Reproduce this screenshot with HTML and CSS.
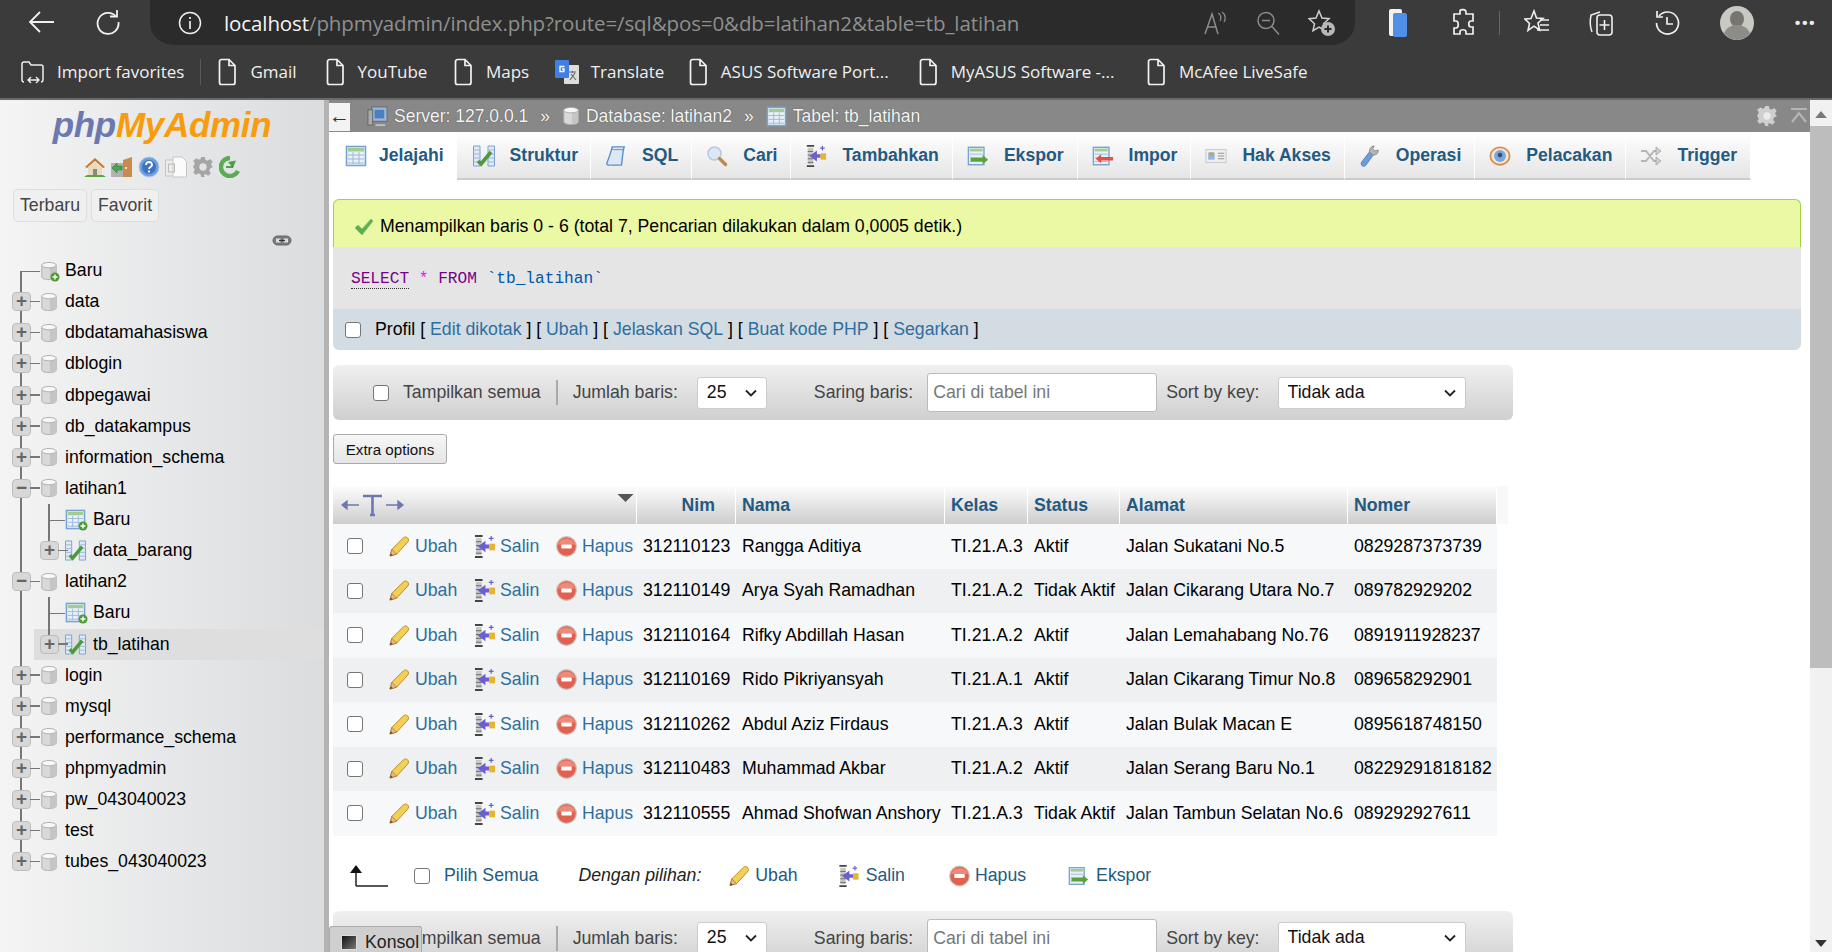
FILE: index.html
```html
<!DOCTYPE html>
<html lang="id">
<head>
<meta charset="utf-8">
<title>phpMyAdmin</title>
<link rel="stylesheet" href="styles.css">
</head>
<body>
<svg class="sprite" aria-hidden="true">
  <symbol id="page" viewBox="0 0 20 28"><path d="M2.500 3.500a2 2 0 0 1 2-2h7.500l6 6v17a2 2 0 0 1-2 2h-11.500a2 2 0 0 1-2-2z M12 1.500v6h6" fill="none" stroke="#f2f2f2" stroke-width="1.700"/></symbol>
  <symbol id="db" viewBox="0 0 20 22"><path d="M2 4.500v13c0 1.800 3.500 3 8 3s8-1.200 8-3v-13z" fill="#d9d9d9" stroke="#aaa"/><path d="M11 7h7v10.500c0 1.500-3 2.600-7 2.900z" fill="#c5c5c5"/><ellipse cx="10" cy="4.500" rx="8" ry="3" fill="#f7f7f7" stroke="#aaa"/></symbol>
  <symbol id="plusbadge" viewBox="0 0 10 10"><circle cx="5" cy="5" r="4.500" fill="#4e9a33"/><path d="M2.500 5h5M5 2.500v5" stroke="#fff" stroke-width="1.400"/></symbol>
  <symbol id="tbl" viewBox="0 0 22 22"><rect x="1.500" y="1.500" width="19" height="19" fill="#e9f0f8" stroke="#7aa3d3" stroke-width="1.600"/><rect x="3" y="3" width="16" height="3.500" fill="#9fcf8f"/><path d="M3 10h16M3 14h16M3 18h16M8 7v12M14 7v12" stroke="#9db9d9"/></symbol>
  <symbol id="struct" viewBox="0 0 22 22"><path d="M.5 1h6.500v20h-6.500zM15 1h6.500v20h-6.500z" fill="#dfe9f5" stroke="#7aa3d3"/><path d="M1 5h6M1 9h6M1 13h6M1 17h6M15 5h6M15 9h6M15 13h6M15 17h6" stroke="#9db9d9"/><path d="M5 16l3 3 10-12" fill="none" stroke="#4c9a3a" stroke-width="3.600"/></symbol>
  <symbol id="scroll" viewBox="0 0 22 24"><path d="M7 2h13c-2 6-2 14-3 20h-14c-1 0-2-1-2-2 2-5 4-11 6-18z" fill="#dce8f6" stroke="#5d8fc7" stroke-width="1.500"/><path d="M7 2c-1 0-1 3 1 3h11" fill="none" stroke="#5d8fc7"/></symbol>
  <symbol id="search" viewBox="0 0 22 22"><circle cx="8.500" cy="8.500" r="6.500" fill="#dbe7f6" stroke="#b8cade" stroke-width="1.600"/><path d="M13.500 13.500l6 6" stroke="#c08a4a" stroke-width="3.400" stroke-linecap="round"/></symbol>
  <symbol id="insrow" viewBox="0 0 22 24"><path d="M1 1h8M1 23h8" stroke="#444" stroke-width="2"/><path d="M2 3h6v18h-6z" fill="#c8c8c8"/><path d="M2 7h6M2 11h6M2 15h6M2 19h6" stroke="#666"/><path d="M4 12l8-6v4h4v4h-4v4z" fill="#6a5fd0"/><rect x="16" y="9" width="6" height="7" fill="#e7b42c"/><path d="M18 1v5M15.500 3.500h5" stroke="#6a5fd0" stroke-width="1.300"/></symbol>
  <symbol id="export" viewBox="0 0 24 22"><rect x="1.500" y="1.500" width="17" height="19" fill="#e9f0f8" stroke="#7aa3d3" stroke-width="1.500"/><rect x="3" y="3" width="14" height="3" fill="#9fcf8f"/><path d="M3 9h14M3 13h14M3 17h14" stroke="#9db9d9"/><path d="M4 13h13v-3l6 5-6 5v-3h-13z" fill="#5aa23a"/></symbol>
  <symbol id="import" viewBox="0 0 24 22"><rect x="1.500" y="1.500" width="17" height="19" fill="#e9f0f8" stroke="#7aa3d3" stroke-width="1.500"/><rect x="3" y="3" width="14" height="3" fill="#9fcf8f"/><path d="M3 9h14M3 13h14M3 17h14" stroke="#9db9d9"/><path d="M23 12h-13v-3l-6 5 6 5v-3h13z" fill="#e2504a"/></symbol>
  <symbol id="card" viewBox="0 0 24 20"><rect x="1" y="3" width="22" height="14" fill="#eef0f2" stroke="#c5c5c5"/><rect x="3.500" y="6" width="7" height="8" fill="#8fb7e3"/><circle cx="7" cy="8" r="2" fill="#d89a5c"/><path d="M14 7h7M14 10h7M14 13h7" stroke="#8a8a8a"/></symbol>
  <symbol id="wrench" viewBox="0 0 22 24"><path d="M3 23c-2-1-2-3-1-4.500l8.500-11 4 3.500-8 11c-.8 1-2 1.500-3.500 1z" fill="#6d9bd6" stroke="#4f7fbb"/><path d="M10.500 7.500c-.5-3 1.500-6 5-6.500l-1.500 3 2 2.500 4-1c.5 3-2.500 6.500-6.500 5z" fill="#b5b5b5" stroke="#888"/></symbol>
  <symbol id="eye" viewBox="0 0 24 22"><ellipse cx="12" cy="11" rx="10.500" ry="9.500" fill="#f7e6d6" stroke="#d98d4e" stroke-width="2"/><circle cx="12" cy="11" r="6.500" fill="#7da6dc"/><circle cx="12" cy="10" r="2.500" fill="#2e4e80"/></symbol>
  <symbol id="shuffle" viewBox="0 0 22 20"><path d="M1 5h5l8 10h3M1 15h5l8-10h3" fill="none" stroke="#b5b5b5" stroke-width="2"/><path d="M16 1l5 4-5 4zM16 11l5 4-5 4z" fill="#d0d0d0" stroke="#999" stroke-width=".7"/></symbol>
  <symbol id="pencil" viewBox="0 0 22 22"><path d="M1 21l2-7L15 2c1.500-1.500 3.500-1 4.500 0s1.500 3 0 4.500L8 19z" fill="#f3cf56" stroke="#b78a2a"/><path d="M1 21l2-7 5 5z" fill="#e7b98a" stroke="#a8733a" stroke-width=".8"/><path d="M1 21l.9-3 2.100 2.100z" fill="#6b4a2a"/></symbol>
  <symbol id="minus" viewBox="0 0 22 22"><circle cx="11" cy="11" r="10.300" fill="#e2604f" stroke="#c9c0b5" stroke-width="1.200"/><path d="M2 9a9.500 9.500 0 0 1 18 0z" fill="#ee8a7a"/><rect x="5.500" y="9" width="11" height="4" rx="1" fill="#fff"/></symbol>
  <symbol id="gear" viewBox="0 0 24 24"><path d="M10 1h4l.7 3.200 2.300 1 2.800-1.800 2.800 2.800-1.800 2.800 1 2.300L23 12v0l-3.200 1.700-1 2.300 1.800 2.800-2.800 2.800-2.800-1.800-2.300 1L14 23h-4l-.7-3.200-2.300-1-2.800 1.800-2.800-2.800L3 15l-1-2.300L1 12l1-1.700 1-2.300-1.800-2.800L5 2.400l2 1.800 2.300-1z" fill="currentColor"/><circle cx="12" cy="12" r="4" fill="#f3f3f3" opacity=".8"/></symbol>
  <symbol id="chev" viewBox="0 0 12 8"><path d="M1 1.500l5 5 5-5" fill="none" stroke="#222" stroke-width="1.800"/></symbol>
</svg>

<header class="chrome">
  <div class="toolbar">
    <svg class="tb back" viewBox="0 0 26 24"><path d="M12 2L2 12l10 10M2 12h24" fill="none" stroke="#f0f0f0" stroke-width="1.800"/></svg>
    <svg class="tb reload" viewBox="0 0 26 26"><path d="M21 7.500A10.500 10.500 0 1 0 23.500 13" fill="none" stroke="#f0f0f0" stroke-width="1.800"/><path d="M15 7.500h7V1" fill="none" stroke="#f0f0f0" stroke-width="1.800"/></svg>
    <div class="addr">
      <svg class="tb info" viewBox="0 0 24 24"><circle cx="12" cy="12" r="10.500" fill="none" stroke="#eee" stroke-width="1.500"/><path d="M12 10v8M12 6v2" stroke="#eee" stroke-width="1.700"/></svg>
      <div class="url"><span class="host">localhost</span>/phpmyadmin/index.php?route=/sql&amp;pos=0&amp;db=latihan2&amp;table=tb_latihan</div>
      <svg class="tb aloud" viewBox="0 0 24 24"><path d="M2 23L9 3l6 20M4.500 16h9" fill="none" stroke="#8b8b8b" stroke-width="1.500"/><path d="M15 2c3 1 3.500 5 2 8M19 1c3.500 2 4 7 2 10" fill="none" stroke="#8b8b8b" stroke-width="1.300"/></svg>
      <svg class="tb zoomi" viewBox="0 0 24 24"><circle cx="10" cy="9.500" r="8" fill="none" stroke="#8b8b8b" stroke-width="1.500"/><path d="M6 9.500h8M16 15.500l7 8" stroke="#8b8b8b" stroke-width="1.500"/></svg>
      <svg class="tb favadd" viewBox="0 0 28 28"><path d="M11 2l3 7 7 .7-5.500 5 1.500 7-6-3.500-6 3.500 1.500-7-5.500-5 7-.7z" fill="none" stroke="#cfcfcf" stroke-width="1.500"/><circle cx="20" cy="20" r="7" fill="#b8b8b8"/><path d="M16.500 20h7M20 16.500v7" stroke="#2b2b2b" stroke-width="2"/></svg>
    </div>
    <div class="tools">
      <svg class="tb t1" viewBox="0 0 20 30"><rect x="1" y="1" width="13" height="27" rx="2" fill="#f2f2f2"/><rect x="5" y="5" width="14" height="24" rx="2" fill="#4f8fe8"/></svg>
      <svg class="tb t2" viewBox="0 0 24 30"><path d="M8 3c0-2 6-2 6 1v2h7v7h-2c-3 0-3 6 0 6h2v7h-7v-2c0-3-6-3-6 0v2H2v-6h2c3 0 3-7 0-7H2V6h6z" fill="none" stroke="#f0f0f0" stroke-width="1.700"/></svg>
      <span class="vsep"></span>
      <svg class="tb t3" viewBox="0 0 26 28"><path d="M10 2l2.500 7 6.500.5-5 4.500 1.500 7-5.500-3.800L4 21.500l1.500-7L1 10l6-.5z" fill="none" stroke="#f0f0f0" stroke-width="1.600"/><path d="M16 11h9M16 16h9M13 21h12" stroke="#f0f0f0" stroke-width="1.600"/></svg>
      <svg class="tb t4" viewBox="0 0 26 30"><path d="M4 24c-2-5-2-12-1-17l9-3" fill="none" stroke="#f0f0f0" stroke-width="1.500"/><path d="M9 10c0-2 1-3 3-3h9c2 0 3 1 3 3v14c0 2-1 3-3 3h-9c-2 0-3-1-3-3z" fill="none" stroke="#f0f0f0" stroke-width="1.600"/><path d="M16.500 12v10M11.500 17h10" stroke="#f0f0f0" stroke-width="1.600"/></svg>
      <svg class="tb t5" viewBox="0 0 26 28"><path d="M5 7A11 11 0 1 1 2.500 14" fill="none" stroke="#f0f0f0" stroke-width="1.700"/><path d="M3 2v6h6M13 8v7h6" fill="none" stroke="#f0f0f0" stroke-width="1.700"/></svg>
      <svg class="tb t6" viewBox="0 0 34 34"><circle cx="17" cy="17" r="17" fill="#c9c9c4"/><ellipse cx="17" cy="13" rx="7" ry="8" fill="#77756f"/><path d="M4 27c3-6 8-8 13-8s10 2 13 8c-3 4-8 7-13 7s-10-3-13-7z" fill="#8e8c86"/></svg>
      <span class="dots">&middot;&middot;&middot;</span>
    </div>
  </div>
  <div class="favs">
    <div class="fav imp"><svg class="tb ficon" viewBox="0 0 24 24"><path d="M3 22c-1.500 0-2-1-2-2V4c0-1 .5-2 2-2h5l2 3h10c1.500 0 2 1 2 2v12c0 2-1 3-2 3" fill="none" stroke="#eee" stroke-width="1.500"/><path d="M8 20h9M10 17l-3 3 3 3M15 17l3 3-3 3" fill="none" stroke="#eee" stroke-width="1.400"/></svg><span>Import favorites</span></div>
    <span class="fsep"></span>
    <div class="fav gmail"><svg class="pg"><use href="#page"/></svg><span>Gmail</span></div>
    <div class="fav yt"><svg class="pg"><use href="#page"/></svg><span>YouTube</span></div>
    <div class="fav maps"><svg class="pg"><use href="#page"/></svg><span>Maps</span></div>
    <div class="fav trans"><svg class="tb gt" viewBox="0 0 24 24"><rect x="9" y="5" width="15" height="19" rx="1" fill="#ddd"/><rect x="0" y="0" width="14" height="18" rx="1" fill="#3f7fe6"/><path d="M9.500 6.500H5v5h4V9H7" fill="none" stroke="#fff" stroke-width="1.300"/><path d="M14 12h7M17.500 11v2M15 20l5-7M16 14l5 6" stroke="#666" stroke-width="1.100" fill="none"/></svg><span>Translate</span></div>
    <div class="fav asus"><svg class="pg"><use href="#page"/></svg><span>ASUS Software Port...</span></div>
    <div class="fav my"><svg class="pg"><use href="#page"/></svg><span>MyASUS Software -...</span></div>
    <div class="fav"><svg class="pg"><use href="#page"/></svg><span>McAfee LiveSafe</span></div>
  </div>
</header>

<div class="app">
  <aside class="side">
    <div class="logo"><span class="php">php</span><span class="mya">MyAdmin</span></div>
    <div class="sicons">
      <svg class="si" viewBox="0 0 22 22"><path d="M1 11L11 2l10 9-2 1-8-7-8 7z" fill="#c9772f"/><path d="M4 11l7-6 7 6v8H4z" fill="#e8dcc0"/><rect x="9" y="13" width="4" height="6" fill="#8a8a7a"/><path d="M0 21h22l-3-2H3z" fill="#57a845"/></svg>
      <svg class="si" viewBox="0 0 22 22"><rect x="0" y="7" width="13" height="14" fill="#777" opacity=".5"/><path d="M12 4l9-3v20h-9z" fill="#c98a4c"/><rect x="14" y="11" width="2" height="2" fill="#f2e3a4"/><path d="M1 12l5-5v3h5v4H6v3z" fill="#45a84a" stroke="#2a7a30" stroke-width=".6"/></svg>
      <svg class="si" viewBox="0 0 22 22"><circle cx="11" cy="11" r="10" fill="#6f9fdc" stroke="#b5c9e4"/><circle cx="11" cy="11" r="7" fill="#3d74c2"/><path d="M8 9c0-4 6-4 6 0 0 2-3 2-3 4" fill="none" stroke="#fff" stroke-width="1.800"/><rect x="10" y="14.500" width="2" height="2" fill="#fff"/></svg>
      <svg class="si" viewBox="0 0 22 22"><rect x="0.500" y="4" width="12" height="16" fill="#ececec" stroke="#c5c5c5"/><path d="M8 1h9l4.500 4.500V21H8z" fill="#fbfbfb" stroke="#c5c5c5"/><rect x="3.500" y="8" width="6" height="8" fill="none" stroke="#bbb"/></svg>
      <svg class="si gear" viewBox="0 0 24 24"><use href="#gear"/></svg>
      <svg class="si" viewBox="0 0 20 22"><path d="M10 2a9 9 0 1 0 8 13" fill="none" stroke="#5cab54" stroke-width="4.500"/><path d="M8 6l8-1.500L13 12z" fill="#4f9e48"/><path d="M6 11h7" stroke="#2f7f2f" stroke-width="1.500"/></svg>
    </div>
    <div class="sbtns"><span class="sbtn">Terbaru</span><span class="sbtn">Favorit</span></div>
    <div class="linkrow"><svg class="link" viewBox="0 0 20 11"><rect x="1" y="1" width="18" height="9" rx="4.500" fill="#7a7a7a" stroke="#666"/><rect x="4" y="3.500" width="4.500" height="4" fill="#ddd"/><rect x="11.500" y="3.500" width="4.500" height="4" fill="#ddd"/><path d="M7 5.500h6" stroke="#333" stroke-width="1.300"/></svg></div>
    <div class="tree">
      <div class="row first"><span class="slot"></span><span class="dbi"><svg><use href="#db"/></svg><svg class="badge"><use href="#plusbadge"/></svg></span><span>Baru</span></div>
      <div class="row"><span class="exp">+</span><span class="dbi"><svg><use href="#db"/></svg></span><span>data</span></div>
      <div class="row"><span class="exp">+</span><span class="dbi"><svg><use href="#db"/></svg></span><span>dbdatamahasiswa</span></div>
      <div class="row"><span class="exp">+</span><span class="dbi"><svg><use href="#db"/></svg></span><span>dblogin</span></div>
      <div class="row"><span class="exp">+</span><span class="dbi"><svg><use href="#db"/></svg></span><span>dbpegawai</span></div>
      <div class="row"><span class="exp">+</span><span class="dbi"><svg><use href="#db"/></svg></span><span>db_datakampus</span></div>
      <div class="row"><span class="exp">+</span><span class="dbi"><svg><use href="#db"/></svg></span><span>information_schema</span></div>
      <div class="row"><span class="exp">&minus;</span><span class="dbi"><svg><use href="#db"/></svg></span><span>latihan1</span></div>
      <div class="row sub new"><span class="tbi"><svg><use href="#tbl"/></svg><svg class="badge"><use href="#plusbadge"/></svg></span><span>Baru</span></div>
      <div class="row sub last"><span class="exp">+</span><span class="tbi"><svg><use href="#struct"/></svg></span><span>data_barang</span></div>
      <div class="row"><span class="exp">&minus;</span><span class="dbi"><svg><use href="#db"/></svg></span><span>latihan2</span></div>
      <div class="row sub new"><span class="tbi"><svg><use href="#tbl"/></svg><svg class="badge"><use href="#plusbadge"/></svg></span><span>Baru</span></div>
      <div class="row sub last sel"><span class="exp">+</span><span class="tbi"><svg><use href="#struct"/></svg></span><span>tb_latihan</span></div>
      <div class="row"><span class="exp">+</span><span class="dbi"><svg><use href="#db"/></svg></span><span>login</span></div>
      <div class="row"><span class="exp">+</span><span class="dbi"><svg><use href="#db"/></svg></span><span>mysql</span></div>
      <div class="row"><span class="exp">+</span><span class="dbi"><svg><use href="#db"/></svg></span><span>performance_schema</span></div>
      <div class="row"><span class="exp">+</span><span class="dbi"><svg><use href="#db"/></svg></span><span>phpmyadmin</span></div>
      <div class="row"><span class="exp">+</span><span class="dbi"><svg><use href="#db"/></svg></span><span>pw_043040023</span></div>
      <div class="row"><span class="exp">+</span><span class="dbi"><svg><use href="#db"/></svg></span><span>test</span></div>
      <div class="row end"><span class="exp">+</span><span class="dbi"><svg><use href="#db"/></svg></span><span>tubes_043040023</span></div>
    </div>
  </aside>
  <div class="divider"></div>
  <main class="main">
    <div class="crumbs">
      <span class="backbox">&larr;</span>
      <svg class="ci srv" viewBox="0 0 22 22"><rect x="5" y="1" width="16" height="15" fill="#9bb7d6" stroke="#667"/><rect x="8" y="4" width="10" height="9" fill="#4a7fc0"/><rect x="1" y="4" width="5" height="16" fill="#aaa" stroke="#666"/><path d="M9 20h10" stroke="#bbb" stroke-width="2"/></svg>
      <span class="ct">Server: 127.0.0.1</span><span class="gt-sep">&raquo;</span>
      <svg class="ci dbc"><use href="#db"/></svg>
      <span class="ct">Database: latihan2</span><span class="gt-sep">&raquo;</span>
      <svg class="ci tblc"><use href="#tbl"/></svg>
      <span class="ct">Tabel: tb_latihan</span>
      <svg class="ci gearc"><use href="#gear"/></svg>
      <svg class="ci top" viewBox="0 0 20 20"><path d="M2 3h16M3 16l7-9 7 9" fill="none" stroke="#b5b5b5" stroke-width="2.200"/></svg>
    </div>
    <nav class="tabs">
      <a class="tab active"><svg><use href="#tbl"/></svg>Jelajahi</a>
      <a class="tab second"><svg><use href="#struct"/></svg>Struktur</a>
      <a class="tab"><svg><use href="#scroll"/></svg>SQL</a>
      <a class="tab"><svg><use href="#search"/></svg>Cari</a>
      <a class="tab"><svg><use href="#insrow"/></svg>Tambahkan</a>
      <a class="tab"><svg><use href="#export"/></svg>Ekspor</a>
      <a class="tab"><svg><use href="#import"/></svg>Impor</a>
      <a class="tab"><svg><use href="#card"/></svg>Hak Akses</a>
      <a class="tab"><svg><use href="#wrench"/></svg>Operasi</a>
      <a class="tab"><svg><use href="#eye"/></svg>Pelacakan</a>
      <a class="tab"><svg><use href="#shuffle"/></svg>Trigger</a>
    </nav>
    <div class="content">
      <div class="alert"><svg viewBox="0 0 20 18"><path d="M1 10l3-3 4 4L17 1l2 2L8 17z" fill="#5cb050" stroke="#7cc070" stroke-width=".7"/></svg>Menampilkan baris 0 - 6 (total 7, Pencarian dilakukan dalam 0,0005 detik.)</div>
      <div class="code"><span class="kw u">SELECT</span> <span class="star">*</span> <span class="kw">FROM</span> <span class="id">`tb_latihan`</span></div>
      <div class="profile"><input type="checkbox" class="cb"><span class="prof">Profil</span> [ <a>Edit dikotak</a> ] [ <a>Ubah</a> ] [ <a>Jelaskan SQL</a> ] [ <a>Buat kode PHP</a> ] [ <a>Segarkan</a> ]</div>

      <div class="navbar">
        <input type="checkbox" class="cb"><span class="showall">Tampilkan semua</span><span class="nsep"></span>
        <span class="jb">Jumlah baris:</span><span class="selwrap w25"><select><option>25</option></select><svg class="chev"><use href="#chev"/></svg></span>
        <span class="sb">Saring baris:</span><input class="filter" type="text" placeholder="Cari di tabel ini">
        <span class="sk">Sort by key:</span><span class="selwrap wkey"><select><option>Tidak ada</option></select><svg class="chev"><use href="#chev"/></svg></span>
      </div>
      <button class="extra">Extra options</button>

      <table class="data">
        <colgroup><col class="c1"><col class="c2"><col class="c3"><col class="c4"><col class="c5"><col class="c6"><col class="c7"><col class="c8"><col class="c9"><col class="c10"><col class="c11"></colgroup>
        <thead><tr>
          <th colspan="4" class="thact"><div class="thin"><svg class="tarrows" viewBox="0 0 63 24"><path d="M1 12h17M1 12l5-4v8zM45 12h17M62 12l-5-4v8z" fill="#6c78af" stroke="#6c78af" stroke-width="1.300"/><path d="M22 3h19M31.500 3v19M29 22h5" fill="none" stroke="#6c78af" stroke-width="2.600"/></svg><svg class="tri" viewBox="0 0 16 8"><path d="M0 0h16l-8 8z" fill="#555"/></svg></div></th>
          <th class="num">Nim</th><th>Nama</th><th>Kelas</th><th>Status</th><th>Alamat</th><th>Nomer</th><th class="thend"></th>
        </tr></thead>
        <tbody>
          <tr><td class="k"><input type="checkbox" class="cb"></td><td class="a"><a><svg><use href="#pencil"/></svg>Ubah</a></td><td class="a"><a><svg><use href="#insrow"/></svg>Salin</a></td><td class="a"><a><svg><use href="#minus"/></svg>Hapus</a></td><td>312110123</td><td>Rangga Aditiya</td><td>TI.21.A.3</td><td>Aktif</td><td>Jalan Sukatani No.5</td><td>0829287373739</td></tr>
          <tr><td class="k"><input type="checkbox" class="cb"></td><td class="a"><a><svg><use href="#pencil"/></svg>Ubah</a></td><td class="a"><a><svg><use href="#insrow"/></svg>Salin</a></td><td class="a"><a><svg><use href="#minus"/></svg>Hapus</a></td><td>312110149</td><td>Arya Syah Ramadhan</td><td>TI.21.A.2</td><td>Tidak Aktif</td><td>Jalan Cikarang Utara No.7</td><td>089782929202</td></tr>
          <tr><td class="k"><input type="checkbox" class="cb"></td><td class="a"><a><svg><use href="#pencil"/></svg>Ubah</a></td><td class="a"><a><svg><use href="#insrow"/></svg>Salin</a></td><td class="a"><a><svg><use href="#minus"/></svg>Hapus</a></td><td>312110164</td><td>Rifky Abdillah Hasan</td><td>TI.21.A.2</td><td>Aktif</td><td>Jalan Lemahabang No.76</td><td>0891911928237</td></tr>
          <tr><td class="k"><input type="checkbox" class="cb"></td><td class="a"><a><svg><use href="#pencil"/></svg>Ubah</a></td><td class="a"><a><svg><use href="#insrow"/></svg>Salin</a></td><td class="a"><a><svg><use href="#minus"/></svg>Hapus</a></td><td>312110169</td><td>Rido Pikriyansyah</td><td>TI.21.A.1</td><td>Aktif</td><td>Jalan Cikarang Timur No.8</td><td>089658292901</td></tr>
          <tr><td class="k"><input type="checkbox" class="cb"></td><td class="a"><a><svg><use href="#pencil"/></svg>Ubah</a></td><td class="a"><a><svg><use href="#insrow"/></svg>Salin</a></td><td class="a"><a><svg><use href="#minus"/></svg>Hapus</a></td><td>312110262</td><td>Abdul Aziz Firdaus</td><td>TI.21.A.3</td><td>Aktif</td><td>Jalan Bulak Macan E</td><td>0895618748150</td></tr>
          <tr><td class="k"><input type="checkbox" class="cb"></td><td class="a"><a><svg><use href="#pencil"/></svg>Ubah</a></td><td class="a"><a><svg><use href="#insrow"/></svg>Salin</a></td><td class="a"><a><svg><use href="#minus"/></svg>Hapus</a></td><td>312110483</td><td>Muhammad Akbar</td><td>TI.21.A.2</td><td>Aktif</td><td>Jalan Serang Baru No.1</td><td>08229291818182</td></tr>
          <tr><td class="k"><input type="checkbox" class="cb"></td><td class="a"><a><svg><use href="#pencil"/></svg>Ubah</a></td><td class="a"><a><svg><use href="#insrow"/></svg>Salin</a></td><td class="a"><a><svg><use href="#minus"/></svg>Hapus</a></td><td>312110555</td><td>Ahmad Shofwan Anshory</td><td>TI.21.A.3</td><td>Tidak Aktif</td><td>Jalan Tambun Selatan No.6</td><td>089292927611</td></tr>
        </tbody>
      </table>

      <div class="bulk">
        <svg class="arrowup" viewBox="0 0 38 24"><path d="M6 22V5M6 22h32" fill="none" stroke="#222" stroke-width="1.500"/><path d="M0 9l6-8 6 8z" fill="#111"/></svg>
        <input type="checkbox" class="cb"><a class="pilih">Pilih Semua</a>
        <em class="dengan">Dengan pilihan:</em>
        <a class="act au"><svg><use href="#pencil"/></svg>Ubah</a>
        <a class="act as"><svg><use href="#insrow"/></svg>Salin</a>
        <a class="act ah"><svg><use href="#minus"/></svg>Hapus</a>
        <a class="act ae"><svg><use href="#export"/></svg>Ekspor</a>
      </div>

      <div class="navbar">
        <input type="checkbox" class="cb"><span class="showall">Tampilkan semua</span><span class="nsep"></span>
        <span class="jb">Jumlah baris:</span><span class="selwrap w25"><select><option>25</option></select><svg class="chev"><use href="#chev"/></svg></span>
        <span class="sb">Saring baris:</span><input class="filter" type="text" placeholder="Cari di tabel ini">
        <span class="sk">Sort by key:</span><span class="selwrap wkey"><select><option>Tidak ada</option></select><svg class="chev"><use href="#chev"/></svg></span>
      </div>
    </div>
    <div class="konsol"><span class="kicon"></span>Konsol</div>
  </main>
  <div class="scrollbar">
    <svg class="sa" viewBox="0 0 10 6"><path d="M5 0l5 6H0z" fill="#777"/></svg>
    <div class="thumb"></div>
    <div class="track"></div>
    <svg class="sa" viewBox="0 0 10 6"><path d="M0 0h10L5 6z" fill="#333"/></svg>
  </div>
</div>
</body>
</html>
```

FILE: styles.css
```css
* { box-sizing: border-box; }
html, body { margin: 0; height: 952px; overflow: hidden; }
body { font-family: "Liberation Sans", Arial, sans-serif; font-size: 17.7px; color: #000; display: flex; flex-direction: column; background: #fff; }
.sprite { display: block; width: 0; height: 0; }
a { color: #235a81; text-decoration: none; }

/* browser chrome */
.chrome { height: 100px; flex: none; background: #3b3b3b; border-bottom: 2px solid #6a6a6a; font-family: "Open Sans", sans-serif; color: #f0f0f0; }
.toolbar { height: 45px; display: flex; align-items: flex-start; padding-left: 28px; }
.tb { display: block; flex: none; }
.back { width: 26px; height: 24px; margin-top: 10px; }
.reload { width: 26px; height: 26px; margin: 9px 0 0 41px; }
.addr { margin-left: 29px; width: 1205px; height: 45px; background: #2b2b2b; border-radius: 0 0 24px 24px / 0 0 22px 22px; display: flex; align-items: center; padding-left: 28px; }
.info { width: 24px; height: 24px; }
.url { margin-left: 22px; width: 951px; font-size: 20.5px; color: #8f8f8f; white-space: nowrap; letter-spacing: -.1px; }
.host { color: #f5f5f5; }
.aloud { width: 24px; height: 26px; margin-left: 28px; }
.zoomi { width: 24px; height: 26px; margin-left: 29px; }
.favadd { width: 28px; height: 28px; margin-left: 28px; }
.tools { display: flex; align-items: center; height: 45px; padding-left: 33px; }
.t1 { width: 20px; height: 30px; }
.t2 { width: 24px; height: 30px; margin-left: 44px; }
.vsep { width: 1px; height: 24px; background: #666; margin-left: 23px; }
.t3 { width: 26px; height: 28px; margin-left: 24px; }
.t4 { width: 26px; height: 30px; margin-left: 38px; }
.t5 { width: 26px; height: 28px; margin-left: 40px; }
.t6 { width: 34px; height: 34px; margin-left: 40px; }
.dots { margin-left: 40px; font-size: 25px; font-weight: 700; color: #eee; line-height: 1; }
.favs { height: 53px; display: flex; align-items: center; padding-left: 21px; font-size: 17px; }
.fav { display: flex; align-items: center; white-space: nowrap; margin-right: 28px; }
.ficon { width: 24px; height: 24px; margin-right: 12px; }
.fsep { width: 1px; height: 26px; background: #5a5a5a; margin: 0 16px 0 -12px; }
.pg { width: 20px; height: 28px; margin-right: 13px; }
.gt { width: 24px; height: 24px; margin-right: 12px; }
.yt { margin-right: 25.5px; }
.maps { margin-right: 25.5px; }
.trans { margin-right: 23.5px; }
.asus { margin-right: 29px; }
.my { margin-right: 31.5px; }

/* layout */
.app { flex: 1; min-height: 0; display: flex; }
.side { width: 324px; flex: none; background: linear-gradient(to right, #f4f4f4, #dadcde); overflow: hidden; color: #000; }
.divider { width: 5px; flex: none; background: #b3b3b3; }
.main { flex: 1; min-width: 0; position: relative; overflow: hidden; display: flex; flex-direction: column; }
.scrollbar { width: 22px; flex: none; background: #f1f1f1; display: flex; flex-direction: column; align-items: center; padding-top: 11px; }
.sa { width: 12px; height: 7px; flex: none; }
.thumb { width: 100%; height: 542px; background: #bdbdbd; margin-top: 8px; flex: none; }
.track { flex: 1; }
.scrollbar .sa:last-child { margin-bottom: 5px; }

/* sidebar */
.logo { text-align: center; font-weight: 700; font-style: italic; font-size: 35px; line-height: 40px; height: 44px; padding-top: 5px; letter-spacing: -.3px; }
.php { color: #6c78af; }
.mya { color: #f89c0e; }
.sicons { display: flex; justify-content: center; gap: 5px; height: 35px; padding-top: 12px; }
.si { width: 22px; height: 22px; }
.si.gear { color: #a5a5a5; }
.sbtns { display: flex; gap: 4px; margin: 10px 0 0 13px; }
.sbtn { height: 33px; padding: 0 6px; line-height: 31px; color: #444; border: 1px solid #ddd; border-radius: 5px; background: #f0f0f0; }
.linkrow { display: flex; justify-content: flex-end; padding-right: 32px; margin-top: 12.5px; height: 11px; }
.link { width: 20px; height: 11px; }
.tree { margin-top: 9.5px; }
.row { position: relative; display: flex; align-items: center; height: 31.13px; padding-left: 12px; white-space: nowrap; }
.row::before { content: ""; position: absolute; left: 20px; top: 0; bottom: 0; width: 1.500px; background: #777; }
.row.first::before { top: 50%; }
.row.first::after { content: ""; position: absolute; left: 20px; width: 20px; top: 50%; height: 1.500px; background: #777; }
.row.end::before { bottom: 50%; }
.slot { width: 28px; flex: none; }
.exp { position: relative; z-index: 1; width: 19px; height: 19px; flex: none; margin-right: 9px; border: 1px solid #bdbdbd; border-radius: 4px; background: #d8d8d8; color: #666; font-weight: 700; font-size: 19px; line-height: 15px; text-align: center; }
.exp::after { content: ""; position: absolute; left: 17px; top: 7.500px; width: 10px; height: 1.500px; background: #777; }
.dbi { position: relative; width: 18px; height: 20px; flex: none; margin-right: 7px; }
.dbi svg, .tbi svg { display: block; width: 100%; height: 100%; }
.dbi .badge, .tbi .badge { position: absolute; right: -2px; bottom: -1px; width: 10px; height: 10px; }
.row.sub { padding-left: 40px; }
.row.sub::before { left: 48px; }
.row.sub::after { content: ""; position: absolute; left: 20px; top: 0; bottom: 0; width: 1.500px; background: #777; }
.row.sub.last::before { bottom: 50%; }
.row.new { padding-left: 65px; }
.row.new .tbi { z-index: 1; }
.row.new .tbi::before { content: ""; position: absolute; left: -17px; top: 50%; width: 17px; height: 1.500px; background: #777; }
.exp + .tbi { margin-left: -3px; }
.tbi { position: relative; width: 21px; height: 21px; flex: none; margin-right: 7px; }
.row.sel { margin-left: 34px; padding-left: 6px; background: #dedede; }
.row.sel::before { left: 14px; }
.row.sel::after { left: -14px; }

/* crumbs */
.crumbs { height: 32px; flex: none; background: #888; display: flex; align-items: center; color: #f6f6f6; text-shadow: 0 0 1px #333; font-size: 17.5px; }
.backbox { width: 21px; height: 28px; background: #f3f3f3; color: #333; line-height: 25px; text-align: center; font-size: 21px; text-shadow: none; margin-top: 2px; overflow: hidden; }
.ci { width: 21px; height: 21px; flex: none; }
.srv { margin-left: 17px; margin-right: 6px; }
.dbc { width: 18px; height: 20px; margin-right: 6px; }
.tblc { margin-right: 6px; }
.ct { white-space: nowrap; }
.gt-sep { margin: 0 12px; }
.gearc { margin-left: auto; color: #cfcfcf; width: 22px; height: 22px; }
.top { margin: 0 1px 0 11px; width: 20px; height: 20px; }

/* tabs */
.tabs { height: 48px; flex: none; display: flex; padding-left: 1px; }
.tab { display: flex; align-items: center; height: 48px; padding: 1.5px 13px 0 14px; font-weight: 700; font-size: 17.6px; color: #235a81; background: linear-gradient(#fff, #e5e5e5); border-right: 1px solid #fff; border-bottom: 2px solid #ccc; white-space: nowrap; }
.tab svg { width: 22px; height: 22px; margin-right: 15px; flex: none; }
.tab.second { padding-left: 16px; padding-right: 12px; }
.tab.active { background: #fff; border-bottom-color: #fff; padding-left: 15px; padding-right: 12px; }
.tab.active svg { margin-right: 12px; }

/* content */
.content { padding: 19px 0 0 4px; flex: 1; min-height: 0; }
.alert { width: 1468px; height: 48px; display: flex; align-items: center; padding: 6px 0 0 20px; background: #ebf8a4; border: 1px solid #a2d246; border-bottom: 0; border-radius: 6px 6px 0 0; white-space: nowrap; }
.alert svg { width: 20px; height: 18px; margin-right: 6px; flex: none; }
.code { width: 1468px; height: 62px; background: #e5e5e5; padding: 22px 0 0 18px; font-family: "Liberation Mono", monospace; font-size: 16.15px; line-height: 20px; white-space: pre; }
.kw { color: #708; }
.u { border-bottom: 1px dotted #333; }
.star { color: #f0f; }
.id { color: #05a; }
.profile { width: 1468px; height: 41px; background: #d3dce3; border-radius: 0 0 6px 6px; display: flex; align-items: center; padding-left: 12px; white-space: pre; }
.profile a { color: #2e6e9e; }
.cb { appearance: none; -webkit-appearance: none; width: 16px; height: 16px; margin: 0; flex: none; background: #fff; border: 1.500px solid #767676; border-radius: 3px; display: block; }
.prof { margin-left: 14px; }
.navbar { width: 1180px; height: 55px; margin-top: 15px; background: linear-gradient(#f0f0f0, #cfcfcf); border-radius: 6px; display: flex; align-items: center; padding-left: 40px; color: #444; white-space: nowrap; }
.showall { margin-left: 14px; }
.nsep { width: 2px; height: 25px; background: #aaa; margin: 0 15px; }
.selwrap { position: relative; display: block; flex: none; height: 32px; }
.selwrap select { appearance: none; -webkit-appearance: none; display: block; width: 100%; height: 32px; font: inherit; color: #111; background: #fff; border: 1px solid #ccc; border-radius: 3px; padding: 0 0 2px 9px; }
.chev { position: absolute; right: 10px; top: 12px; width: 12px; height: 8px; pointer-events: none; }
.w25 { width: 70px; margin-left: 19px; }
.sb { margin-left: 47px; }
.filter { font: inherit; width: 230px; height: 39px; margin-left: 14px; padding: 0 5px; background: #fff; border: 1px solid #bbb; border-radius: 3px; }
.filter::placeholder { color: #777; }
.sk { margin-left: 9px; }
.wkey { width: 188px; margin-left: 18px; }
.extra { display: block; margin-top: 14px; height: 30px; width: 114px; padding: 0; font: 15.2px "Liberation Sans", Arial, sans-serif; color: #111; background: linear-gradient(#f7f7f7, #e5e5e5); border: 1px solid #aaa; border-radius: 3px; }

/* table */
.data { margin-top: 22px; width: 1175px; table-layout: fixed; border-collapse: separate; border-spacing: 0; white-space: nowrap; }
.c1 { width: 51px; } .c2 { width: 86px; } .c3 { width: 82px; } .c4 { width: 85px; }
.c5 { width: 99px; } .c6 { width: 209px; } .c7 { width: 83px; } .c8 { width: 92px; } .c9 { width: 228px; } .c10 { width: 149px; } .c11 { width: 11px; }
.data th { height: 38px; padding: 0 6px; text-align: left; color: #235a81; background: linear-gradient(#fdfdfd, #cdcdcd); border-right: 1px solid #fff; font-weight: 700; }
.data th.num { text-align: right; padding-right: 20px; }
.data th.thact { padding: 0; }
.data th.thend { padding: 0; background: #f7f8fa; border-right: 0; }
.thin { display: flex; justify-content: space-between; align-items: center; padding: 0 2px 0 8px; }
.tarrows { width: 63px; height: 24px; }
.tri { width: 17px; height: 8px; margin: 0 0 14px; }
.data td { height: 44.5px; padding: 0 0 0 6px; background: #f7f8fa; }
.data tr:nth-child(even) td { background: #eef0f1; }
.data td.k { padding-left: 14px; }
.data td.a { padding-left: 5px; }
.data td.a + td.a { padding-left: 4px; }
.data td a { display: flex; align-items: center; color: #2e6e9e; }
.data td a svg { width: 21px; height: 23px; margin-right: 5px; flex: none; }

/* bulk */
.bulk { display: flex; align-items: center; height: 26px; margin-top: 27px; white-space: nowrap; }
.arrowup { width: 38px; height: 24px; margin-left: 17px; flex: none; }
.bulk .cb { margin-left: 26px; }
.pilih { margin-left: 14px; }
.dengan { margin-left: 40px; color: #222; }
.act { display: flex; align-items: center; }
.act svg { width: 21px; height: 22px; margin-right: 5px; flex: none; }
.au { margin-left: 28px; }
.as { margin-left: 40px; }
.as svg, .ae svg { margin-right: 7px; }
.ah { margin-left: 44px; }
.ae { margin-left: 42px; }
.bulk + .navbar { margin-top: 22px; }

/* konsol */
.konsol { position: absolute; left: 0; bottom: 0; height: 26px; width: 93px; background: #cfcfcf; border: 1px solid #aaa; border-bottom: 0; border-radius: 3px 3px 0 0; padding-left: 35px; line-height: 30px; color: #222; white-space: nowrap; overflow: hidden; }
.kicon { position: absolute; left: 11px; top: 8px; width: 16px; height: 15px; background: linear-gradient(135deg, #111, #777); border: 1px solid #ddd; }
```
